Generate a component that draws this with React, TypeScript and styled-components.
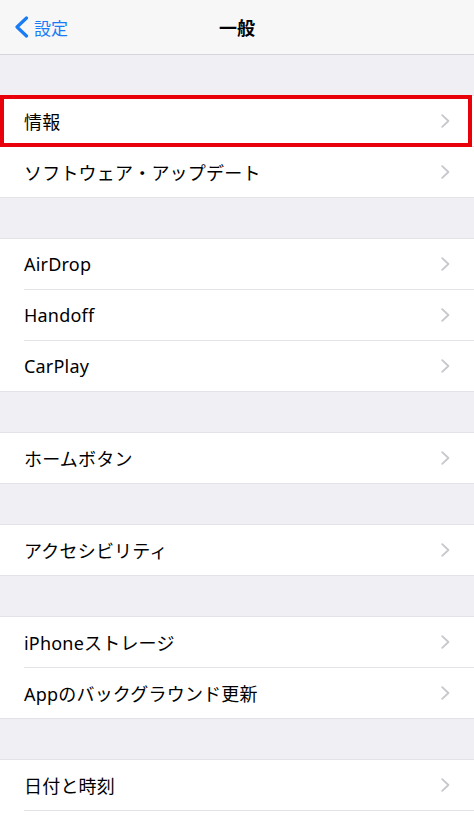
import * as React from "react";
import styled, { createGlobalStyle } from "styled-components";

const GlobalStyle = createGlobalStyle`
    html, body {
        margin: 0;
        padding: 0;
        background: #efeff4;
    }
    body {
        font-family: "Noto Sans", "Noto Sans CJK JP", sans-serif;
        -webkit-font-smoothing: antialiased;
    }
`;

const Screen = styled.div`
    width: 474px;
    height: 823px;
    background: #efeff4;
    overflow: hidden;
`;

const NavBar = styled.div`
    position: relative;
    height: 54px;
    display: flex;
    align-items: center;
    justify-content: center;
    background: #f7f7f8;
    border-bottom: 1px solid #d6d6da;
`;

const BackButton = styled.div`
    position: absolute;
    left: 14px;
    top: 0;
    bottom: 0;
    display: flex;
    align-items: center;
    gap: 5px;
    color: #1a7cf5;
    font-size: 17px;
`;

const NavTitle = styled.div`
    font-size: 18px;
    font-weight: 700;
    color: #000;
`;

const Gap = styled.div`
    height: 40px;
`;

const Group = styled.div`
    background: #fff;
    border-top: 1px solid #e3e3e7;
    border-bottom: 1px solid #e3e3e7;
`;

const Row = styled.div<{ $highlighted?: boolean }>`
    position: relative;
    height: 50px;
    display: flex;
    align-items: center;
    padding: 0 24px;
    font-size: 18px;
    color: #000;
    &:not(:last-child)::after {
        content: "";
        position: absolute;
        left: 24px;
        right: 0;
        bottom: -1px;
        height: 1px;
        background: #e3e3e7;
        z-index: 1;
    }
    & + & {
        margin-top: 1px;
    }
    ${(p) =>
        p.$highlighted &&
        `
        &::before {
            content: "";
            position: absolute;
            left: 0;
            right: 2px;
            top: -1px;
            bottom: -1px;
            border: 4px solid #e8000b;
            z-index: 2;
        }
    `}
`;

const Label = styled.span`
    flex: 1;
    letter-spacing: 0.2px;
`;

const Chevron = () => (
    <svg width="9" height="14" viewBox="0 0 9 14" fill="none">
        <path d="M1.2 1.2 L7.4 7 L1.2 12.8" stroke="#c7c7cc" strokeWidth="1.8" strokeLinecap="round" strokeLinejoin="round" />
    </svg>
);

const BackChevron = () => (
    <svg width="15" height="22" viewBox="0 0 15 22" fill="none">
        <path d="M12.5 2 L3 11 L12.5 20" stroke="#1a7cf5" strokeWidth="3.2" strokeLinecap="round" strokeLinejoin="round" />
    </svg>
);

// the last row only peeks in below the fold, so it carries no label
const groups: string[][] = [
    ["情報", "ソフトウェア・アップデート"],
    ["AirDrop", "Handoff", "CarPlay"],
    ["ホームボタン"],
    ["アクセシビリティ"],
    ["iPhoneストレージ", "Appのバックグラウンド更新"],
    ["日付と時刻", ""],
];

const App = () => {
    return (
        <Screen>
            <GlobalStyle />
            <NavBar>
                <BackButton>
                    <BackChevron />
                    <span>設定</span>
                </BackButton>
                <NavTitle>一般</NavTitle>
            </NavBar>
            {groups.map((items, gi) => (
                <React.Fragment key={gi}>
                    <Gap />
                    <Group>
                        {items.map((item, i) => (
                            <Row key={i} $highlighted={gi === 0 && i === 0}>
                                <Label>{item}</Label>
                                {item && <Chevron />}
                            </Row>
                        ))}
                    </Group>
                </React.Fragment>
            ))}
        </Screen>
    );
};

export default App;
